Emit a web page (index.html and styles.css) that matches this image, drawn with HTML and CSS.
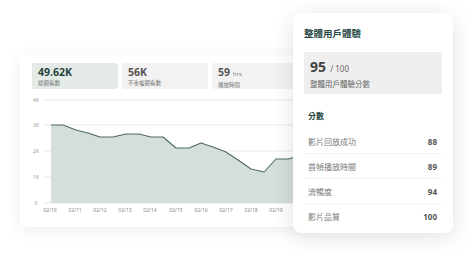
FILE: index.html
```html
<!DOCTYPE html>
<html>
<head>
  <title>觀看體驗</title>
  <link rel="stylesheet" href="styles.css">
</head>
<body>
  <div class="stage">
    <div class="chart-card">
      <div class="stats">
        <div class="stat stat-active">
          <div class="stat-value">49.62K</div>
          <div class="stat-label">總觀看數</div>
        </div>
        <div class="stat">
          <div class="stat-value">56K</div>
          <div class="stat-label">不重複觀看數</div>
        </div>
        <div class="stat">
          <div class="stat-value">59 <span class="unit">hrs</span></div>
          <div class="stat-label">播放時間</div>
        </div>
      </div>
      <svg class="chart" width="290" height="128" viewBox="0 0 290 128">
        <g class="grid">
          <line x1="24" y1="8" x2="290" y2="8"/>
          <line x1="24" y1="33" x2="290" y2="33"/>
          <line x1="24" y1="59" x2="290" y2="59"/>
          <line x1="24" y1="85" x2="290" y2="85"/>
          <line x1="24" y1="111" x2="290" y2="111"/>
        </g>
        <g class="ylab">
          <text x="16" y="10">4K</text>
          <text x="16" y="35">3K</text>
          <text x="16" y="61">2K</text>
          <text x="16" y="87">1K</text>
          <text x="16" y="113">0</text>
        </g>
        <polygon class="area" points="31,111 31,33 43,33 56,38 68,41 80,45 93,45 106,42 119,42 131,45 143,45 156,56 169,56 181,51 193,55 206,60 218,68 231,77 244,80 256,67 269,67 280,63 290,60 290,111"/>
        <polyline class="line" points="31,33 43,33 56,38 68,41 80,45 93,45 106,42 119,42 131,45 143,45 156,56 169,56 181,51 193,55 206,60 218,68 231,77 244,80 256,67 269,67 280,63 290,60"/>
        <g class="xlab">
          <text x="30" y="120">02/10</text>
          <text x="55" y="120">02/11</text>
          <text x="80" y="120">02/12</text>
          <text x="105" y="120">02/13</text>
          <text x="130" y="120">02/14</text>
          <text x="156" y="120">02/15</text>
          <text x="181" y="120">02/16</text>
          <text x="206" y="120">02/17</text>
          <text x="231" y="120">02/18</text>
          <text x="256" y="120">02/19</text>
        </g>
      </svg>
    </div>

    <div class="score-card">
      <h2 class="score-title">整體用戶體驗</h2>
      <div class="score-box">
        <div class="score-main"><span class="score-num">95</span> <span class="score-total">/ 100</span></div>
        <div class="score-label">整體用戶體驗分數</div>
      </div>
      <h3 class="sub-title">分數</h3>
      <div class="score-list">
        <div class="score-row"><span>影片回放成功</span><b>88</b></div>
        <div class="score-row"><span>首幀播放時間</span><b>89</b></div>
        <div class="score-row"><span>流暢度</span><b>94</b></div>
        <div class="score-row"><span>影片品質</span><b>100</b></div>
      </div>
    </div>
  </div>
</body>
</html>
```

FILE: styles.css
```css
body {
  margin: 0;
  background-color: #fff;
  font-family: "Noto Sans", "Noto Sans CJK TC", sans-serif;
}
.stage {
  position: relative;
  width: 474px;
  height: 262px;
  overflow: hidden;
}
.chart-card {
  margin: 55px 0 0 20px;
  width: 290px;
  height: 172px;
  padding-top: 8px;
  box-sizing: border-box;
  background-color: #fff;
  border-radius: 6px;
  box-shadow: 0 3px 16px rgba(0, 0, 0, 0.08);
}
.stats {
  display: flex;
  gap: 4px;
  padding-left: 12px;
}
.stat {
  width: 86px;
  height: 26px;
  padding: 3px 6px 0;
  box-sizing: border-box;
  background-color: #f2f2f2;
  border-radius: 2px;
  flex-shrink: 0;
}
.stat-active {
  background-color: #e4ebe7;
}
.stat-value {
  font-size: 10.5px;
  font-weight: bold;
  line-height: 13px;
  color: #555;
}
.stat-active .stat-value {
  color: #1f4540;
}
.unit {
  font-size: 6px;
  font-weight: normal;
  color: #888;
}
.stat-label {
  font-size: 5.5px;
  line-height: 8px;
  color: #777;
}
.chart {
  display: block;
  margin-top: 3px;
}
.grid line {
  stroke: #e4e4e4;
  stroke-width: 0.8;
}
.ylab text {
  font-size: 5px;
  fill: #999;
  text-anchor: middle;
}
.xlab text {
  font-size: 5px;
  fill: #888;
  text-anchor: middle;
}
.area {
  fill: #d4dedc;
}
.line {
  fill: none;
  stroke: #4e6a65;
  stroke-width: 1.1;
  stroke-linejoin: round;
}
.score-card {
  position: absolute;
  left: 293px;
  top: 13px;
  width: 160px;
  height: 220px;
  padding: 14px 11px 0;
  box-sizing: border-box;
  background-color: #fff;
  border-radius: 8px;
  box-shadow: 0 4px 22px rgba(0, 0, 0, 0.12);
}
.score-title {
  margin: 0;
  font-size: 9.5px;
  line-height: 14px;
  font-weight: bold;
  color: #264744;
}
.score-box {
  margin-top: 11px;
  height: 42px;
  padding: 6px 6px 0;
  box-sizing: border-box;
  background-color: #efefef;
}
.score-main {
  line-height: 16px;
  color: #444;
}
.score-num {
  font-size: 14px;
  font-weight: bold;
}
.score-total {
  font-size: 8px;
  color: #666;
}
.score-label {
  margin-top: 2px;
  font-size: 7.5px;
  line-height: 11px;
  color: #666;
}
.sub-title {
  margin: 16px 0 0 4px;
  font-size: 8px;
  line-height: 12px;
  font-weight: bold;
  color: #264744;
}
.score-list {
  margin-top: 7px;
}
.score-row {
  display: flex;
  justify-content: space-between;
  align-items: center;
  height: 24px;
  padding: 0 5px 0 4px;
  border-bottom: 1px solid #f5f5f5;
  font-size: 8px;
  color: #777;
}
.score-row:last-child {
  border-bottom: none;
}
.score-row b {
  color: #555;
}
```
